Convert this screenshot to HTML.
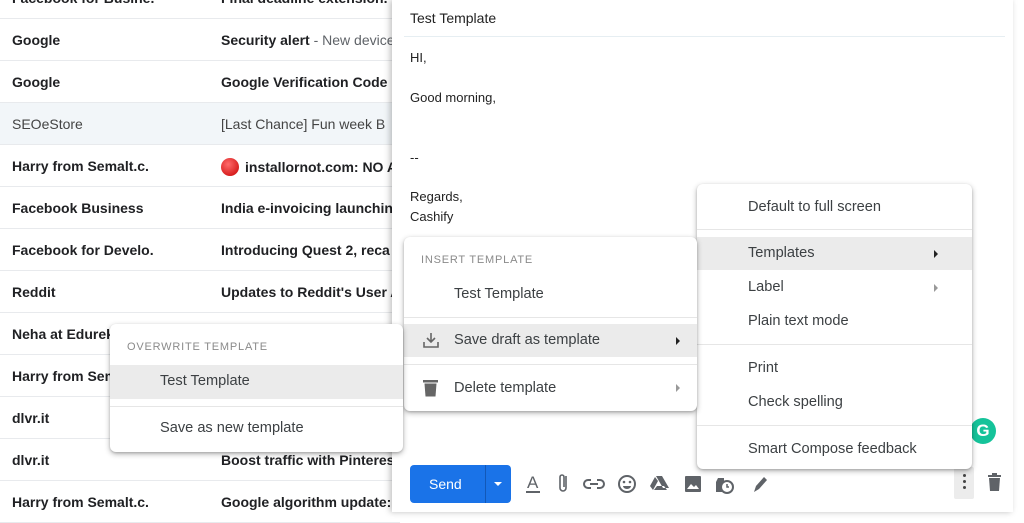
<!DOCTYPE html>
<html><head><meta charset="utf-8"><style>
*{margin:0;padding:0;box-sizing:border-box}
body{width:1024px;height:512px;overflow:hidden;background:#fff;font-family:"Liberation Sans",Arial,sans-serif;position:relative;color:#202124}
.row{position:absolute;left:0;width:400px;height:42px;border-bottom:1px solid #e8eaed;font-size:14px;font-weight:bold;color:#202124}
.row .s{position:absolute;left:12px;top:13px;white-space:nowrap}
.row .t{position:absolute;left:221px;top:13px;white-space:nowrap}
.compose{position:absolute;left:392px;top:0;width:621px;height:512px;background:#fff;box-shadow:-2px 0 6px rgba(0,0,0,.25)}
.ct{position:absolute;font-size:13px;color:#222;white-space:nowrap}
.menu{position:absolute;background:#fff;border-radius:6px;box-shadow:0 2px 6px rgba(0,0,0,.3),0 1px 2px rgba(0,0,0,.15)}
.mi{position:absolute;left:0;right:0;font-size:14.6px;color:#3c4043;white-space:nowrap}
.hl{background:#ebebeb}
.sep{position:absolute;left:0;right:0;height:1px;background:#e6e6e6}
.hd{position:absolute;font-size:11px;letter-spacing:.8px;color:#8a8a8a}
.arr{position:absolute;width:0;height:0;border-top:4px solid transparent;border-bottom:4px solid transparent;border-left:4px solid #222}
</style></head><body>
<div class="row" style="top:-23px"><span class="s">Facebook for Busine.</span><span class="t">Final deadline extension.</span></div>
<div class="row" style="top:19px"><span class="s">Google</span><span class="t">Security alert <span style="font-weight:normal;color:#5f6368">- New device</span></span></div>
<div class="row" style="top:61px"><span class="s">Google</span><span class="t">Google Verification Code</span></div>
<div class="row" style="top:103px;background:#f2f6f9;font-weight:normal;color:#444"><span class="s">SEOeStore</span><span class="t">[Last Chance] Fun week B</span></div>
<div class="row" style="top:145px"><span class="s">Harry from Semalt.c.</span><span class="t"><span style="display:inline-block;width:18px;height:18px;border-radius:50%;background:radial-gradient(circle at 40% 35%,#ff6b6b,#c80000);vertical-align:-4px;margin-right:6px"></span>installornot.com: NO A</span></div>
<div class="row" style="top:187px"><span class="s">Facebook Business</span><span class="t">India e-invoicing launching</span></div>
<div class="row" style="top:229px"><span class="s">Facebook for Develo.</span><span class="t">Introducing Quest 2, reca</span></div>
<div class="row" style="top:271px"><span class="s">Reddit</span><span class="t">Updates to Reddit's User A</span></div>
<div class="row" style="top:313px"><span class="s">Neha at Edureka</span><span class="t"></span></div>
<div class="row" style="top:355px"><span class="s">Harry from Semalt</span></div>
<div class="row" style="top:397px"><span class="s">dlvr.it</span></div>
<div class="row" style="top:439px"><span class="s">dlvr.it</span><span class="t">Boost traffic with Pinterest</span></div>
<div class="row" style="top:481px"><span class="s">Harry from Semalt.c.</span><span class="t">Google algorithm update:</span></div>

<div class="compose">
<div class="ct" style="left:18px;top:10px;font-size:14px">Test Template</div>
<div style="position:absolute;left:12px;top:36px;width:601px;height:1px;background:#e6eef2"></div>
<div class="ct" style="left:18px;top:50px">HI,</div>
<div class="ct" style="left:18px;top:90px">Good morning,</div>
<div class="ct" style="left:18px;top:150px">--</div>
<div class="ct" style="left:18px;top:189px">Regards,</div>
<div class="ct" style="left:18px;top:209px">Cashify</div>
<div style="position:absolute;left:18px;top:465px;width:101px;height:38px;background:#1a73e8;border-radius:4px;color:#fff;font-size:14px">
<span style="position:absolute;left:19px;top:11px">Send</span>
<div style="position:absolute;left:75px;top:0;width:1px;height:38px;background:#1258b8"></div>
<div style="position:absolute;left:84px;top:17px;border-left:4px solid transparent;border-right:4px solid transparent;border-top:4px solid #fff"></div>
</div>
<svg style="position:absolute;left:130px;top:470px" width="390" height="28" viewBox="0 0 390 28" fill="#5f6368">
<text x="5" y="18" font-size="17" font-family="Liberation Sans" fill="#5f6368">A</text><rect x="4" y="21" width="14" height="2"/>
<path d="M44 6v12a3 3 0 0 1-6 0V7a2 2 0 0 1 4 0v10" fill="none" stroke="#5f6368" stroke-width="1.6"/>
<path d="M69 10h-3a4 4 0 0 0 0 8h3M75 10h3a4 4 0 0 1 0 8h-3M68 14h8" fill="none" stroke="#5f6368" stroke-width="2"/>
<circle cx="105" cy="14" r="8" fill="none" stroke="#5f6368" stroke-width="2"/><circle cx="102" cy="12" r="1.3"/><circle cx="108" cy="12" r="1.3"/><path d="M101 16a4 3 0 0 0 8 0z"/>
<path d="M134 6h6l7 12h-6zM133 7l-5 9 3 4 5-9zM132 20h13l-3-4h-7z"/>
<rect x="163" y="6" width="16" height="16" rx="1"/><path d="M165 19l4-5 3 3 2-2 3 4z" fill="#fff"/>
<path d="M196 8h6v14h-8v-10z"/><circle cx="205" cy="17" r="6" fill="#fff" stroke="#5f6368" stroke-width="2"/><path d="M205 14v3h2" stroke="#5f6368" fill="none" stroke-width="1.5"/>
<path d="M232 22l2-6 8-9 3 3-8 9z"/>
</svg>
<div style="position:absolute;left:562px;top:467px;width:20px;height:32px;background:#ececec;border-radius:2px"></div>
<div style="position:absolute;left:571px;top:474px;width:3px;height:3px;background:#444;border-radius:50%;box-shadow:0 6px 0 #444,0 12px 0 #444"></div>
<svg style="position:absolute;left:595px;top:473px" width="16" height="20"><rect x="1" y="2" width="13" height="2" fill="#5f6368"/><rect x="5" y="0" width="5" height="2" fill="#5f6368"/><path d="M2 5h11l-1 13H3z" fill="#5f6368"/></svg>
</div>

<div style="position:absolute;left:970px;top:418px;width:26px;height:26px;border-radius:50%;background:#15c39a;color:#fff;font-weight:bold;font-size:17px;text-align:center;line-height:26px">G</div>

<div class="menu" style="left:697px;top:184px;width:275px;height:285px">
<div class="mi" style="top:15px;padding-left:51px">Default to full screen</div>
<div class="sep" style="top:45px"></div>
<div class="mi hl" style="top:53px;height:33px;padding:8px 0 0 51px">Templates</div><div class="arr" style="left:237px;top:66px"></div>
<div class="mi" style="top:95px;padding-left:51px">Label</div><div class="arr" style="left:237px;top:100px;border-left-color:#999"></div>
<div class="mi" style="top:129px;padding-left:51px">Plain text mode</div>
<div class="sep" style="top:160px"></div>
<div class="mi" style="top:176px;padding-left:51px">Print</div>
<div class="mi" style="top:210px;padding-left:51px">Check spelling</div>
<div class="sep" style="top:241px"></div>
<div class="mi" style="top:257px;padding-left:51px">Smart Compose feedback</div>
</div>

<div class="menu" style="left:404px;top:237px;width:293px;height:174px">
<div class="hd" style="left:17px;top:17px">INSERT TEMPLATE</div>
<div class="mi" style="top:49px;padding-left:50px">Test Template</div>
<div class="sep" style="top:80px"></div>
<div class="mi hl" style="top:87px;height:33px;padding:8px 0 0 50px">Save draft as template</div>
<svg style="position:absolute;left:18px;top:94px" width="18" height="18"><path d="M9 2v9M5 7l4 4 4-4M2 11v5h14v-5" fill="none" stroke="#666" stroke-width="1.6"/></svg>
<div class="arr" style="left:272px;top:100px"></div>
<div class="sep" style="top:127px"></div>
<div class="mi" style="top:143px;padding-left:50px">Delete template</div>
<svg style="position:absolute;left:19px;top:142px" width="16" height="18"><rect x="0" y="1" width="15" height="2.5" fill="#666"/><path d="M1.5 4.5h12l-1 13h-10z" fill="#666"/></svg>
<div class="arr" style="left:272px;top:147px;border-left-color:#999"></div>
</div>

<div class="menu" style="left:110px;top:324px;width:293px;height:128px">
<div class="hd" style="left:17px;top:17px">OVERWRITE TEMPLATE</div>
<div class="mi hl" style="top:41px;height:34px;padding:8px 0 0 50px">Test Template</div>
<div class="sep" style="top:82px"></div>
<div class="mi" style="top:96px;padding-left:50px">Save as new template</div>
</div>
</body></html>
